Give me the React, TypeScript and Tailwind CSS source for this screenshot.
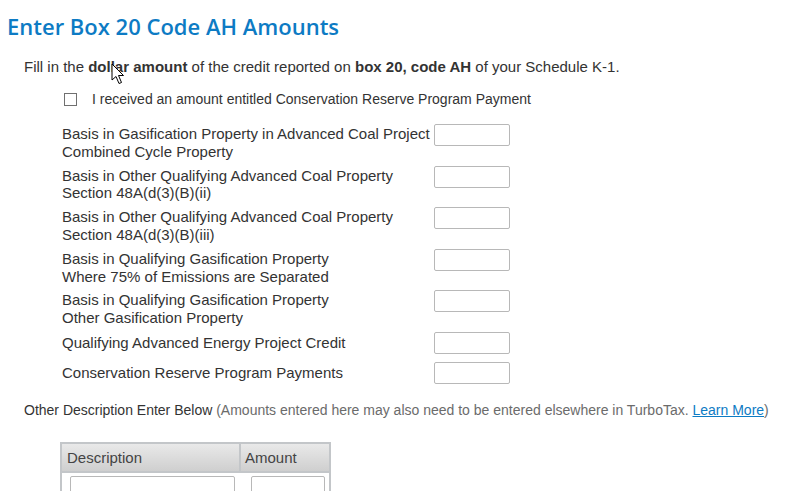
import React from "react";

const ROWS: string[][] = [
  ["Basis in Gasification Property in Advanced Coal Project", "Combined Cycle Property"],
  ["Basis in Other Qualifying Advanced Coal Property", "Section 48A(d(3)(B)(ii)"],
  ["Basis in Other Qualifying Advanced Coal Property", "Section 48A(d(3)(B)(iii)"],
  ["Basis in Qualifying Gasification Property", "Where 75% of Emissions are Separated"],
  ["Basis in Qualifying Gasification Property", "Other Gasification Property"],
  ["Qualifying Advanced Energy Project Credit"],
  ["Conservation Reserve Program Payments"],
];

function Cursor() {
  return (
    <svg
      className="pointer-events-none absolute left-[111px] top-[63px]"
      width="14"
      height="22"
      viewBox="0 0 14 22"
    >
      <path
        d="M1 1 L1 17 L5 13.5 L8 20.5 L10.5 19.5 L7.5 12.5 L12.5 12.5 Z"
        fill="#fff"
        stroke="#000"
        strokeWidth="1"
        strokeLinejoin="round"
      />
    </svg>
  );
}

export default function App() {
  return (
    <div className="relative h-[491px] w-[798px] overflow-hidden bg-white font-['Liberation_Sans',Arial,sans-serif] text-[14px] text-[#333]">
      <h1 className="pl-[7px] pt-[11px] font-['Open_Sans',sans-serif] text-[22px] font-semibold leading-[30px] text-[#0d7bc4]">
        Enter Box 20 Code AH Amounts
      </h1>

      <p className="mt-[17px] pl-[24px] text-[15px] leading-[18px]">
        Fill in the <b>dollar amount</b> of the credit reported on <b>box 20, code AH</b> of your Schedule K-1.
      </p>

      <label className="mt-[14px] flex items-center pl-[64px] leading-[18px]">
        <span className="h-[13px] w-[13px] shrink-0 border border-[#707070] bg-white" />
        <span className="ml-[15px]">I received an amount entitled Conservation Reserve Program Payment</span>
      </label>

      <div className="mt-[16px] flex flex-col gap-[5px] pl-[62px] text-[15px]">
        {ROWS.map((lines, i) => (
          <div key={i} className={`flex items-start ${i === 6 ? "mt-[3px]" : ""}`}>
            <div className={`w-[372px] leading-[17.8px] ${lines.length === 1 ? "pt-[2px]" : "pt-px"}`}>
              {lines.map((l) => (
                <div key={l}>{l}</div>
              ))}
            </div>
            <input
              type="text"
              className="h-[22px] w-[76px] rounded-[2px] border border-[#b8b8b8] bg-white outline-none"
            />
          </div>
        ))}
      </div>

      <p className="mt-[17px] pl-[24px] leading-[18px]">
        Other Description Enter Below{" "}
        <span className="text-[#6b6b6b]">
          (Amounts entered here may also need to be entered elsewhere in TurboTax.{" "}
          <a href="#" className="text-[#0d7bc4] underline">
            Learn More
          </a>
          )
        </span>
      </p>

      <div className="ml-[60px] mt-[23px] w-[271px] border-2 border-[#c3c6c9]">
        <div className="flex h-[27px] bg-gradient-to-b from-[#e9e9e9] to-[#cfcfcf] text-[15px] leading-[27px] text-[#444]">
          <div className="w-[179px] border-r-2 border-[#c3c6c9] pl-[5px]">Description</div>
          <div className="flex-1 pl-[4px]">Amount</div>
        </div>
        <div className="flex h-[40px] border-t-2 border-[#c3c6c9] pt-[3px]">
          <div className="w-[179px] pl-[8px]">
            <input className="h-[24px] w-[165px] rounded-[2px] border border-[#b8b8b8] outline-none" />
          </div>
          <div className="flex-1 pl-[10px]">
            <input className="h-[24px] w-[74px] rounded-[2px] border border-[#b8b8b8] outline-none" />
          </div>
        </div>
      </div>

      <Cursor />
    </div>
  );
}
